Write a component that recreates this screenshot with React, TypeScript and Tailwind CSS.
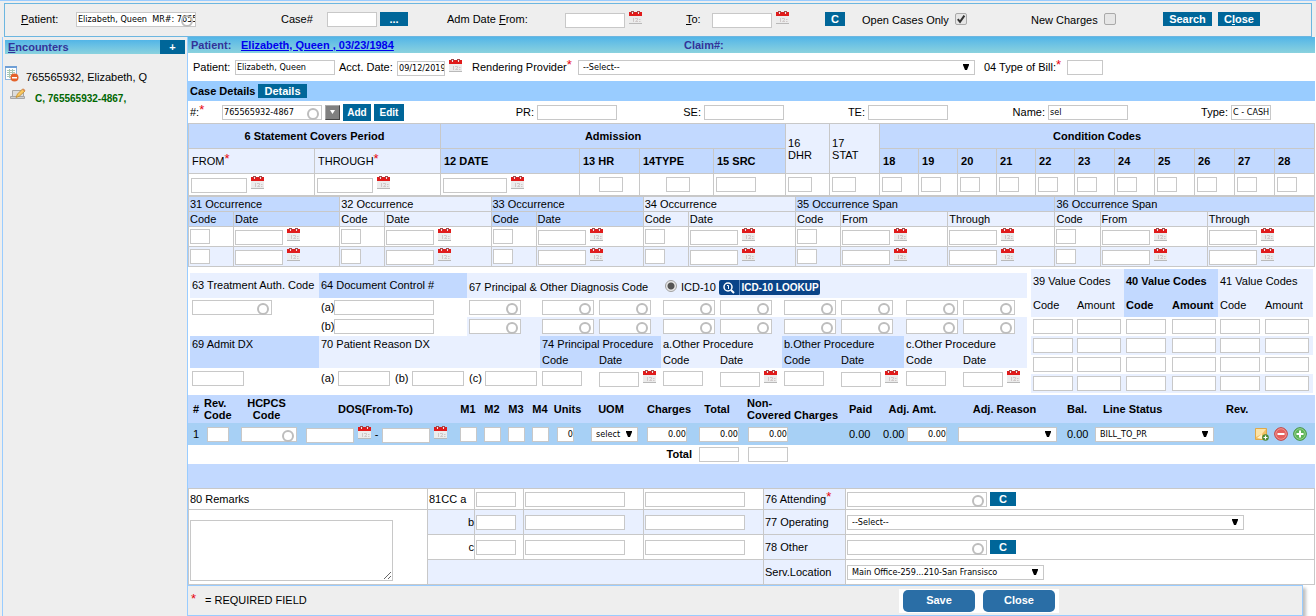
import type { ReactNode } from "react"
import clsx from "clsx"

// Shared form controls

type FieldProps = {
  label: string
  className?: string
  value?: string
  lookup?: boolean
  numeric?: boolean
}

function Field({ label, className, value, lookup, numeric }: FieldProps) {
  return (
    <span className={clsx("relative block h-[15px] shrink-0 overflow-hidden", className)}>
      <input
        type="text"
        aria-label={label}
        defaultValue={value}
        className={clsx(
          "block h-full w-full border border-[#c8c8c8] bg-white font-['DejaVu_Sans_Condensed','DejaVu_Sans',sans-serif] text-[9px] text-black outline-none",
          numeric ? "text-right" : "pl-px"
        )}
      />
      {lookup && (
        <span className="pointer-events-none absolute top-[3px] right-[3px] size-3 rounded-full border-2 border-[#bdbdbd]" />
      )}
    </span>
  )
}

function CalendarIcon() {
  return (
    <svg viewBox="0 0 13 13" className="block size-[13px]" aria-hidden="true">
      <rect x="0" y="2" width="13" height="11" fill="#ececec" />
      <rect x="0" y="1" width="13" height="4" fill="#e01b1b" />
      <rect x="2" y="0" width="3" height="2" fill="#a34a4a" />
      <rect x="8" y="0" width="3" height="2" fill="#a34a4a" />
      <rect x="3" y="1" width="1" height="2" fill="#f6e4e4" />
      <rect x="9" y="1" width="1" height="2" fill="#f6e4e4" />
      <path d="M4.5 7v4M6 7.500h2.500v1.500l-2 1.500H9M10 8.500h1.500M10 10.500h1.500" fill="none" stroke="#cfc8c8" />
      <rect x="0" y="12" width="13" height="1" fill="#b9b9b9" />
    </svg>
  )
}

function DateField({ label, className, value }: FieldProps) {
  return (
    <span className="flex shrink-0 items-start gap-1">
      <span className="pt-[2px]">
        <Field label={label} className={className} value={value} />
      </span>
      <button type="button" aria-label={`${label} calendar`}>
        <CalendarIcon />
      </button>
    </span>
  )
}

function Select({ label, className, options }: { label: string; className: string; options: string[] }) {
  return (
    <span className={clsx("relative block h-[15px] shrink-0", className)}>
      <select
        aria-label={label}
        className="block h-full w-full appearance-none border border-[#c8c8c8] bg-white pl-1 font-['DejaVu_Sans_Condensed','DejaVu_Sans',sans-serif] text-[9px] text-black"
      >
        {options.map((option) => (
          <option key={option}>{option}</option>
        ))}
      </select>
      <svg viewBox="0 0 6 6" className="pointer-events-none absolute top-1 right-[6px] size-[6px]" aria-hidden="true">
        <path d="M0 0h6v1L4 6H2L0 1z" fill="#000" />
      </svg>
    </span>
  )
}

function Button({ children, className }: { children: ReactNode; className: string }) {
  return (
    <button type="button" className={clsx("shrink-0 bg-[#006699] text-center font-bold text-white", className)}>
      {children}
    </button>
  )
}

function Checkbox({ id, checked }: { id: string; checked?: boolean }) {
  return (
    <span className="relative block size-3 shrink-0">
      <input
        id={id}
        type="checkbox"
        defaultChecked={checked}
        className="peer block size-3 appearance-none rounded-[2px] border border-[#a9a9a9] bg-[#e6e6e6]"
      />
      <svg
        viewBox="0 0 12 12"
        className="pointer-events-none absolute inset-0 hidden size-3 peer-checked:block"
        aria-hidden="true"
      >
        <path d="M2.8 6.2l2.2 2.6L9.4 2.6" fill="none" stroke="#333" strokeWidth="2" />
      </svg>
    </span>
  )
}

const Star = () => <sup className="relative -top-[2px] align-baseline text-[13px] leading-none text-red-600">*</sup>

// Top search bar

function SearchBar() {
  return (
    <div className="mx-1 mt-[2px] flex h-[34px] items-center border border-[#6cb6e0] pb-[2px]">
      <span className="w-[71px] pl-4">
        <u>P</u>atient:
      </span>
      <Field label="Patient search" className="w-[120px]" value="Elizabeth, Queen  MR#: 76556" lookup />
      <span className="w-[131px] pl-[85px]">Case#</span>
      <Field label="Case#" className="w-[50px]" />
      <Button className="ml-[3px] h-[14px] w-7 leading-[10px]">...</Button>
      <span className="w-[157px] pl-[39px]">
        Adm Date <u>F</u>rom:
      </span>
      <DateField label="Adm date from" className="w-[60px]" />
      <span className="w-[70px] pl-11">
        <u>T</u>o:
      </span>
      <DateField label="Adm date to" className="w-[60px]" />
      <Button className="ml-9 h-[14px] w-5 leading-[14px]">C</Button>
      <label htmlFor="open-cases" className="ml-[17px] w-[93px] pt-[3px]">
        Open Cases Only
      </label>
      <Checkbox id="open-cases" checked />
      <label htmlFor="new-charges" className="ml-16 w-[73px] pt-[3px]">
        New Charges
      </label>
      <Checkbox id="new-charges" />
      <Button className="ml-[47px] h-[14px] w-[49px] leading-[14px]">Search</Button>
      <Button className="ml-[6px] h-[14px] w-[42px] leading-[14px]">
        C<u>l</u>ose
      </Button>
    </div>
  )
}

// Left column with the encounter list

function Encounters() {
  return (
    <aside className="w-[185px] shrink-0 border-l border-[#99ccff] pt-[3px] pl-[2px]">
      <div className="flex h-[14px] w-[180px] bg-linear-to-b from-[#52b5e7] to-[#8ad2de]">
        <h2 className="flex-1 pl-[3px] leading-[15px] font-bold text-[#333399]">
          <u>E</u>ncounters
        </h2>
        <Button className="w-[25px] leading-[14px]">+</Button>
      </div>
      <div className="mt-3 flex items-start">
        <svg viewBox="0 0 14 16" className="h-4 w-[14px]" aria-hidden="true">
          <rect x="0.5" y="0.5" width="11" height="13" fill="#fff" stroke="#8db3dc" />
          <rect x="0" y="0" width="12" height="2" fill="#6f9fd6" />
          <path d="M2 4.500h8M2 6.500h8M2 8.500h8M2 10.500h8M4.5 3v9M7.5 3v9" stroke="#a9c9b4" fill="none" />
          <circle cx="9.5" cy="11.5" r="4" fill="#e4622a" />
          <rect x="7" y="11" width="5" height="1.5" fill="#fff" />
        </svg>
        <span className="pt-[5px] pl-[7px]">765565932, Elizabeth, Q</span>
      </div>
      <div className="mt-1 flex items-start pl-[5px]">
        <svg viewBox="0 0 16 12" className="h-3 w-4" aria-hidden="true">
          <path d="M2.5 2.500h11v6h-11z" fill="#dcdcdc" stroke="#a5a5a5" />
          <path d="M0.500 8.500h14v2H0.500z" fill="#d0d0d0" stroke="#a5a5a5" />
          <path d="M6 9.500l1.500-3.500 5-5 2.500 2-5.500 5z" fill="#f9c860" stroke="#c08a2c" strokeWidth="0.8" />
          <path d="M12 1.500l1.500-1 2 1.800-1 1z" fill="#d98a5a" />
        </svg>
        <span className="pt-1 pl-[9px] text-[10px] font-bold text-[#006600]">C, 765565932-4867,</span>
      </div>
    </aside>
  )
}

// Patient and case rows

function PatientHeader() {
  return (
    <>
      <div className="flex h-4 items-center bg-linear-to-b from-[#52b5e7] to-[#8ad2de] pl-[3px] font-bold text-[#333399]">
        <span className="w-[50px]">Patient:</span>
        <a href="#patient" className="w-[443px] text-[#0000ee] underline">
          Elizabeth, Queen , 03/23/1984
        </a>
        <span>Claim#:</span>
      </div>
      <div className="flex h-7 items-center pl-[5px]">
        <span className="w-[42px]">Patient:</span>
        <Field label="Patient" className="w-[100px]" value="Elizabeth, Queen" />
        <span className="w-[62px] pl-1">Acct. Date:</span>
        <DateField label="Acct. date" className="w-[48px]" value="09/12/2019" />
        <span className="w-[116px] pl-[10px] whitespace-nowrap">
          Rendering Provider
          <Star />
        </span>
        <Select label="Rendering provider" className="w-[397px]" options={["--Select--"]} />
        <span className="w-[92px] pl-[9px] whitespace-nowrap">
          04 Type of Bill:
          <Star />
        </span>
        <Field label="Type of bill" className="w-9" />
      </div>
      <div className="flex h-5 items-center bg-[#99ccff] pl-[2px]">
        <h3 className="w-[68px] font-bold">Case Details</h3>
        <Button className="h-[14px] w-[49px] leading-[14px]">Details</Button>
      </div>
      <div className="flex h-[22px] items-center pl-[2px]">
        <span className="w-8">
          #:
          <Star />
        </span>
        <Field label="Case number" className="w-[100px]" value="765565932-4867" lookup />
        <button
          type="button"
          aria-label="Case list"
          className="ml-[3px] flex size-[15px] items-center justify-center border border-t-[#aaa] border-r-[#444] border-b-[#444] border-l-[#aaa] bg-[#808080]"
        >
          <svg viewBox="0 0 5 4" className="h-1 w-[5px]" aria-hidden="true">
            <path d="M0 0h5L2.500 4z" fill="#fff" />
          </svg>
        </button>
        <Button className="ml-[3px] h-[17px] w-7 text-[10px]">Add</Button>
        <Button className="ml-[3px] h-[17px] w-[30px] text-[10px]">Edit</Button>
        <span className="w-[133px] pr-[3px] text-right">PR:</span>
        <Field label="PR" className="w-20" />
        <span className="w-[87px] pr-[3px] text-right">SE:</span>
        <Field label="SE" className="w-20" />
        <span className="w-[84px] pr-[3px] text-right">TE:</span>
        <Field label="TE" className="w-20" />
        <span className="w-[100px] pr-[3px] text-right">Name:</span>
        <Field label="Name" className="w-20" value="sel" />
        <span className="w-[103px] pr-[3px] text-right">Type:</span>
        <Field label="Type" className="w-10" value="C - CASH" />
      </div>
    </>
  )
}

const conditionCodes = [18, 19, 20, 21, 22, 23, 24, 25, 26, 27, 28]

function StatementTable() {
  return (
    <table className="w-full table-fixed border-collapse text-left [&_td]:border [&_td]:border-[#c8c8c8] [&_td]:pl-[2px] [&_th]:border [&_th]:border-[#c8c8c8]">
      <colgroup>
        <col className="w-[126px]" />
        <col className="w-[126px]" />
        <col className="w-[139px]" />
        <col className="w-[60px]" />
        <col className="w-[74px]" />
        <col className="w-[72px]" />
        <col className="w-[44px]" />
        <col className="w-[50px]" />
        {conditionCodes.map((code) => (
          <col key={code} className={code < 23 ? "w-[39px]" : "w-[40px]"} />
        ))}
      </colgroup>
      <thead>
        <tr className="h-[25px] bg-[#c2d9ff] text-center">
          <th colSpan={2}>6 Statement Covers Period</th>
          <th colSpan={4}>Admission</th>
          <th rowSpan={2} className="bg-[#e9f0ff] pl-[2px] text-left leading-3 font-normal">
            16
            <br />
            DHR
          </th>
          <th rowSpan={2} className="bg-[#e9f0ff] pl-[2px] text-left leading-3 font-normal">
            17
            <br />
            STAT
          </th>
          <th colSpan={11}>Condition Codes</th>
        </tr>
        <tr className="h-[25px] bg-[#c2d9ff] [&>th]:pl-[3px]">
          <th className="bg-[#e9f0ff] font-normal">
            FROM
            <Star />
          </th>
          <th className="bg-[#e9f0ff] font-normal">
            THROUGH
            <Star />
          </th>
          <th>12 DATE</th>
          <th>13 HR</th>
          <th>14TYPE</th>
          <th>15 SRC</th>
          {conditionCodes.map((code) => (
            <th key={code}>{code}</th>
          ))}
        </tr>
      </thead>
      <tbody>
        <tr className="h-[22px]">
          <td>
            <DateField label="Statement from" className="w-14" />
          </td>
          <td>
            <DateField label="Statement through" className="w-14" />
          </td>
          <td>
            <DateField label="Admission date" className="w-16" />
          </td>
          <td>
            <Field label="Admission hour" className="mx-auto w-6" />
          </td>
          <td>
            <Field label="Admission type" className="mx-auto w-6" />
          </td>
          <td>
            <Field label="Admission source" className="w-10" />
          </td>
          <td>
            <Field label="DHR" className="w-6" />
          </td>
          <td>
            <Field label="STAT" className="w-6" />
          </td>
          {conditionCodes.map((code) => (
            <td key={code}>
              <Field label={`Condition code ${code}`} className="w-5" />
            </td>
          ))}
        </tr>
      </tbody>
    </table>
  )
}

// Occurrence groups: the last two cover a span and have two dates
const occurrences = [
  { no: 31, span: false, head: "bg-[#c2d9ff]", sub: "bg-[#c2d9ff]" },
  { no: 32, span: false, head: "bg-[#e9f0ff]", sub: "bg-[#e9f0ff]" },
  { no: 33, span: false, head: "bg-[#c2d9ff]", sub: "bg-[#c2d9ff]" },
  { no: 34, span: false, head: "bg-[#e9f0ff]", sub: "bg-[#e9f0ff]" },
  { no: 35, span: true, head: "bg-[#c2d9ff]", sub: "bg-[#e9f0ff]" },
  { no: 36, span: true, head: "bg-[#c2d9ff]", sub: "bg-[#e9f0ff]" },
]

const occurrenceColumns = occurrences.flatMap(({ no, span, sub }) =>
  (span ? ["Code", "From", "Through"] : ["Code", "Date"]).map((name) => ({ no, name, sub }))
)

function occurrenceWidth(no: number, name: string) {
  if (name === "Code") return "w-[45px]"
  return no < 33 ? "w-[106px]" : "w-[107px]"
}

function OccurrenceTable() {
  return (
    <table className="w-full table-fixed border-collapse text-left [&_td]:border [&_td]:border-[#c8c8c8] [&_td]:pl-px [&_th]:border [&_th]:border-[#c8c8c8] [&_th]:pl-px [&_th]:font-normal">
      <colgroup>
        {occurrenceColumns.map(({ no, name }) => (
          <col key={`${no}${name}`} className={occurrenceWidth(no, name)} />
        ))}
      </colgroup>
      <thead>
        <tr className="h-[15px]">
          {occurrences.map(({ no, span, head }) => (
            <th key={no} colSpan={span ? 3 : 2} className={head}>
              {no} Occurrence{span && " Span"}
            </th>
          ))}
        </tr>
        <tr className="h-[15px]">
          {occurrenceColumns.map(({ no, name, sub }) => (
            <th key={`${no}${name}`} className={sub}>
              {name}
            </th>
          ))}
        </tr>
      </thead>
      <tbody>
        {[1, 2].map((row) => (
          <tr key={row} className={row === 2 ? "h-5 bg-[#e9f0ff]" : "h-5"}>
            {occurrenceColumns.map(({ no, name }) => (
              <td key={`${no}${name}`}>
                {name === "Code" ? (
                  <Field label={`${no} code ${row}`} className="w-5" />
                ) : (
                  <DateField label={`${no} ${name} ${row}`} className="w-12" />
                )}
              </td>
            ))}
          </tr>
        ))}
      </tbody>
    </table>
  )
}

const procedures = ["74 Principal Procedure", "a.Other Procedure", "b.Other Procedure", "c.Other Procedure"]

function DiagnosisTable() {
  return (
    <table className="w-[837px] table-fixed border-collapse text-left [&_td]:py-0 [&_td]:pl-[2px] [&_th]:pl-[2px] [&_th]:font-normal">
      <colgroup>
        <col className="w-[129px]" />
        <col className="w-[148px]" />
        <col className="w-[73px]" />
        <col className="w-[57px]" />
        <col className="w-[64px]" />
        <col className="w-[57px]" />
        <col className="w-[64px]" />
        <col className="w-[57px]" />
        <col className="w-[65px]" />
        <col className="w-[57px]" />
        <col className="w-[66px]" />
      </colgroup>
      <tbody>
        <tr className="h-[25px] bg-[#e9f0ff]">
          <th className="whitespace-nowrap">63 Treatment Auth. Code</th>
          <th className="bg-[#c2d9ff]">64 Document Control #</th>
          <th colSpan={9}>
            <div className="flex items-center pt-1">
              <span className="w-[196px]">67 Principal &amp; Other Diagnosis Code</span>
              <input
                id="icd10"
                type="radio"
                defaultChecked
                className="-mt-1 block size-3 appearance-none rounded-full border border-[#a0a0a0] bg-[radial-gradient(circle,#555_0,#555_3px,#e8e8e8_4px)]"
              />
              <label htmlFor="icd10" className="w-[42px] pl-1">
                ICD-10
              </label>
              <button type="button" className="flex h-[15px] w-[101px] items-center rounded-[2px] bg-[#0a4488] text-white">
                <svg viewBox="0 0 21 15" className="h-[15px] w-[21px] shrink-0" aria-hidden="true">
                  <circle cx="9" cy="7" r="4" fill="none" stroke="#fff" strokeWidth="1.500" />
                  <path d="M12 10l3 3" stroke="#fff" strokeWidth="2" />
                  <path d="M8 5.500h1.500V9" stroke="#fff" fill="none" />
                  <path d="M20.500 0v15" stroke="#5b86bb" />
                </svg>
                <span className="flex-1 text-center text-[10px] font-bold whitespace-nowrap">ICD-10 LOOKUP</span>
              </button>
            </div>
          </th>
        </tr>
        {["a", "b"].map((row) => (
          <tr key={row} className="h-[19px]">
            <td>{row === "a" && <Field label="Treatment auth. code" className="w-20" lookup />}</td>
            <td>
              <div className="flex items-center">
                <span className="w-[13px]">({row})</span>
                <Field label={`Document control ${row}`} className="w-[100px]" />
              </div>
            </td>
            {[1, 2, 3, 4, 5, 6, 7, 8, 9].map((n) => (
              <td key={n} className={row === "b" ? "bg-[#e9f0ff]" : ""}>
                <Field label={`Diagnosis ${row}${n}`} className="w-[52px]" lookup />
              </td>
            ))}
          </tr>
        ))}
        <tr className="h-4 bg-[#e9f0ff]">
          <th rowSpan={2} className="bg-[#c2d9ff] pt-[2px] align-top">
            69 Admit DX
          </th>
          <th rowSpan={2} colSpan={2} className="pt-[2px] align-top">
            70 Patient Reason DX
          </th>
          {procedures.map((name, i) => (
            <th key={name} colSpan={2} className={i % 2 === 0 ? "bg-[#c2d9ff] whitespace-nowrap" : "whitespace-nowrap"}>
              {name}
            </th>
          ))}
        </tr>
        <tr className="h-4 bg-[#e9f0ff]">
          {procedures.flatMap((name, i) =>
            ["Code", "Date"].map((part) => (
              <th key={name + part} className={i % 2 === 0 ? "bg-[#c2d9ff]" : ""}>
                {part}
              </th>
            ))
          )}
        </tr>
        <tr className="h-[21px]">
          <td>
            <Field label="Admit DX" className="w-[52px]" />
          </td>
          <td colSpan={2}>
            <div className="flex items-center">
              <span className="w-[17px]">(a)</span>
              <Field label="Patient reason a" className="w-[52px]" />
              <span className="w-[22px] pl-[5px]">(b)</span>
              <Field label="Patient reason b" className="w-[52px]" />
              <span className="w-[21px] pl-[5px]">(c)</span>
              <Field label="Patient reason c" className="w-[52px]" />
            </div>
          </td>
          {procedures.flatMap((name) => [
            <td key={`${name}-code`}>
              <Field label={`${name} code`} className="w-10" />
            </td>,
            <td key={`${name}-date`}>
              <DateField label={`${name} date`} className="w-10" />
            </td>,
          ])}
        </tr>
      </tbody>
    </table>
  )
}

function ValueCodesTable() {
  return (
    <table className="w-[282px] table-fixed border-collapse text-left [&_td]:pl-[2px] [&_th]:pl-[2px]">
      <colgroup>
        <col className="w-[44px]" />
        <col className="w-[49px]" />
        <col className="w-[46px]" />
        <col className="w-[48px]" />
        <col className="w-[45px]" />
        <col className="w-[50px]" />
      </colgroup>
      <thead>
        {["head", "sub"].map((row) => (
          <tr key={row} className="h-6 bg-[#e9f0ff]">
            {[39, 40, 41].map((no) => {
              const tone = no === 40 ? "bg-[#c2d9ff] font-bold" : "font-normal"
              return row === "head" ? (
                <th key={no} colSpan={2} className={tone}>
                  {no} Value Codes
                </th>
              ) : (
                ["Code", "Amount"].map((part) => (
                  <th key={no + part} className={tone}>
                    {part}
                  </th>
                ))
              )
            })}
          </tr>
        ))}
      </thead>
      <tbody>
        {[1, 2, 3, 4].map((row) => (
          <tr key={row} className={row % 2 === 0 ? "h-[19px] bg-[#e9f0ff]" : "h-[19px]"}>
            {[39, 40, 41].flatMap((no) => [
              <td key={`${no}c`}>
                <Field label={`Value code ${no} ${row}`} className="w-10" />
              </td>,
              <td key={`${no}a`}>
                <Field label={`Value amount ${no} ${row}`} className="w-11" />
              </td>,
            ])}
          </tr>
        ))}
      </tbody>
    </table>
  )
}

function ServiceLines() {
  return (
    <table className="w-full table-fixed border-collapse text-left">
      <colgroup>
        <col className="w-[16px]" />
        <col className="w-[34px]" />
        <col className="w-[65px]" />
        <col className="w-[153px]" />
        <col className="w-[24px]" />
        <col className="w-[24px]" />
        <col className="w-[24px]" />
        <col className="w-[24px]" />
        <col className="w-[39px]" />
        <col className="w-[56px]" />
        <col className="w-[52px]" />
        <col className="w-[48px]" />
        <col className="w-[102px]" />
        <col className="w-[34px]" />
        <col className="w-[75px]" />
        <col className="w-[109px]" />
        <col className="w-[28px]" />
        <col className="w-[131px]" />
        <col />
      </colgroup>
      <thead>
        <tr className="h-7 bg-[#c2d9ff] leading-3 whitespace-nowrap [&>th]:pl-0">
          <th className="text-center">#</th>
          <th>
            Rev.
            <br />
            Code
          </th>
          <th className="pr-2 text-center">
            HCPCS
            <br />
            Code
          </th>
          <th className="pr-2 text-center">DOS(From-To)</th>
          <th className="text-center">M1</th>
          <th className="text-center">M2</th>
          <th className="text-center">M3</th>
          <th className="text-center">M4</th>
          <th className="pr-2 text-center">Units</th>
          <th className="pr-4 text-center">UOM</th>
          <th className="pr-2 text-center">Charges</th>
          <th className="pr-3 text-center">Total</th>
          <th>
            Non-
            <br />
            Covered Charges
          </th>
          <th>Paid</th>
          <th className="pr-4 text-center">Adj. Amt.</th>
          <th className="pr-4 text-center">Adj. Reason</th>
          <th>Bal.</th>
          <th>
            <span className="pl-2">Line Status</span>
          </th>
          <th>Rev.</th>
        </tr>
      </thead>
      <tbody>
        <tr className="h-[22px] bg-[#a7d0f5]">
          <td className="text-center">1</td>
          <td>
            <Field label="Rev. code" className="ml-[3px] w-[22px]" />
          </td>
          <td>
            <Field label="HCPCS code" className="ml-[3px] w-14" lookup />
          </td>
          <td>
            <div className="flex items-center pl-[3px]">
              <DateField label="DOS from" className="w-12" />
              <span className="w-[11px] text-center">-</span>
              <DateField label="DOS to" className="w-12" />
            </div>
          </td>
          {["M1", "M2", "M3", "M4"].map((name) => (
            <td key={name}>
              <Field label={name} className="mx-auto w-[17px]" />
            </td>
          ))}
          <td>
            <Field label="Units" className="ml-[5px] w-[17px]" value="0" numeric />
          </td>
          <td>
            <Select label="UOM" className="w-[47px]" options={["select"]} />
          </td>
          <td>
            <Field label="Charges" className="w-10" value="0.00" numeric />
          </td>
          <td>
            <Field label="Line total" className="w-10" value="0.00" numeric />
          </td>
          <td>
            <Field label="Non-covered charges" className="ml-px w-10" value="0.00" numeric />
          </td>
          <td>0.00</td>
          <td>
            <div className="flex items-center">
              <span className="w-6">0.00</span>
              <Field label="Adj. amount" className="w-10" value="0.00" numeric />
            </div>
          </td>
          <td>
            <Select label="Adj. reason" className="w-[99px]" options={[""]} />
          </td>
          <td>0.00</td>
          <td>
            <Select label="Line status" className="w-[119px]" options={["BILL_TO_PR"]} />
          </td>
          <td>
            <div className="flex gap-[5px] pl-[29px]">
              <button type="button" aria-label="Add note">
                <svg viewBox="0 0 14 14" className="block size-[14px]" aria-hidden="true">
                  <path d="M0.500 1.500h11v8l-3 3h-8z" fill="#f2bf62" stroke="#dfa94a" />
                  <path d="M1 2h10L7 7 1 10z" fill="#fbe3a6" />
                  <path d="M2 11l5-4v5z" fill="#fff3cf" />
                  <circle cx="10.500" cy="10.500" r="3.300" fill="#4c8a34" />
                  <path d="M8.500 10.500h4M10.500 8.500v4" stroke="#fff" strokeWidth="1.200" />
                </svg>
              </button>
              <button type="button" aria-label="Remove line">
                <svg viewBox="0 0 14 14" className="block size-[14px]" aria-hidden="true">
                  <circle cx="7" cy="7" r="6.300" fill="#e4605d" stroke="#c23b39" />
                  <circle cx="7" cy="7" r="5.300" fill="none" stroke="#f3a5a2" strokeWidth="0.800" />
                  <rect x="3.500" y="6" width="7" height="2" fill="#fff" />
                </svg>
              </button>
              <button type="button" aria-label="Add line">
                <svg viewBox="0 0 14 14" className="block size-[14px]" aria-hidden="true">
                  <circle cx="7" cy="7" r="6.300" fill="#5cb457" stroke="#3d8f3a" />
                  <circle cx="7" cy="7" r="5.300" fill="none" stroke="#a6dba0" strokeWidth="0.800" />
                  <path d="M3.500 7h7M7 3.500v7" stroke="#fff" strokeWidth="2" />
                </svg>
              </button>
            </div>
          </td>
        </tr>
        <tr className="h-[19px]">
          <td colSpan={11} className="pr-[7px] text-right font-bold">
            Total
          </td>
          <td>
            <Field label="Sum of totals" className="w-10" />
          </td>
          <td colSpan={7}>
            <Field label="Sum of non-covered charges" className="ml-px w-10" />
          </td>
        </tr>
        <tr className="h-6 bg-[#c2d9ff]">
          <td colSpan={19} />
        </tr>
      </tbody>
    </table>
  )
}

function CodeFields({ row }: { row: string }) {
  return (
    <>
      <td>
        <Field label={`81CC ${row} qualifier`} className="w-10" />
      </td>
      <td>
        <Field label={`81CC ${row} code`} className="w-[100px]" />
      </td>
      <td>
        <Field label={`81CC ${row} value`} className="w-[100px]" />
      </td>
    </>
  )
}

function ProviderField({ label }: { label: string }) {
  return (
    <div className="flex items-center gap-[3px]">
      <Field label={label} className="w-[140px]" lookup />
      <Button className="h-[14px] w-[26px] leading-[14px]">C</Button>
    </div>
  )
}

function RemarksTable() {
  return (
    <table className="w-full table-fixed border-collapse text-left [&_td]:border [&_td]:border-[#c8c8c8] [&_td]:pl-px">
      <colgroup>
        <col className="w-[239px]" />
        <col className="w-[47px]" />
        <col className="w-[49px]" />
        <col className="w-[120px]" />
        <col className="w-[120px]" />
        <col className="w-[82px]" />
        <col />
      </colgroup>
      <tbody>
        <tr className="h-[21px]">
          <td>
            <label htmlFor="remarks">80 Remarks</label>
          </td>
          <td>81CC a</td>
          <CodeFields row="a" />
          <td className="bg-[#e9f0ff]">
            76 Attending
            <Star />
          </td>
          <td>
            <ProviderField label="Attending" />
          </td>
        </tr>
        <tr className="h-[25px] bg-[#e9f0ff]">
          <td rowSpan={3} className="bg-white align-bottom">
            <textarea id="remarks" className="mb-[3px] block h-[61px] w-[203px] resize border border-[#c8c8c8] bg-white" />
          </td>
          <td className="text-right">b</td>
          <CodeFields row="b" />
          <td>77 Operating</td>
          <td className="bg-white">
            <Select label="Operating" className="w-[397px]" options={["--Select--"]} />
          </td>
        </tr>
        <tr className="h-[25px]">
          <td className="text-right">c</td>
          <CodeFields row="c" />
          <td className="bg-[#e9f0ff]">78 Other</td>
          <td>
            <ProviderField label="Other" />
          </td>
        </tr>
        <tr className="h-[25px] bg-[#e9f0ff]">
          <td colSpan={4} />
          <td>Serv.Location</td>
          <td className="bg-white">
            <Select label="Service location" className="w-[197px]" options={["Main Office-259...210-San Fransisco"]} />
          </td>
        </tr>
      </tbody>
    </table>
  )
}

function Footer() {
  return (
    <footer className="mr-3 flex h-[31px] items-center border-y border-r border-[#99ccff] bg-[#eeeeee] shadow-[3px_3px_3px_#c0c0c0]">
      <span className="w-[17px] pl-[3px]">
        <Star />
      </span>
      <span className="w-[694px]">= REQUIRED FIELD</span>
      <div className="flex gap-2 bg-white px-1 py-px">
        <button type="button" className="h-[22px] w-[72px] rounded-[5px] bg-[#2a6ea6] font-bold text-white">
          Save
        </button>
        <button type="button" className="h-[22px] w-[72px] rounded-[5px] bg-[#2a6ea6] font-bold text-white">
          Close
        </button>
      </div>
    </footer>
  )
}

export default function App() {
  return (
    <div className="overflow-hidden border-t border-[#99ccff] bg-[#eeeeee] font-['Liberation_Sans',Arial,sans-serif] text-[11px] leading-[13px] text-black">
      <SearchBar />
      <div className="flex pl-[2px]">
        <Encounters />
        <main className="min-w-0 flex-1 border-l border-[#99ccff] bg-white pr-px">
          <PatientHeader />
          <StatementTable />
          <OccurrenceTable />
          <div className="flex items-start justify-between pt-[2px] pr-[2px] pb-[2px] pl-[2px]">
            <div className="pt-1">
              <DiagnosisTable />
            </div>
            <ValueCodesTable />
          </div>
          <ServiceLines />
          <RemarksTable />
          <Footer />
        </main>
      </div>
    </div>
  )
}
